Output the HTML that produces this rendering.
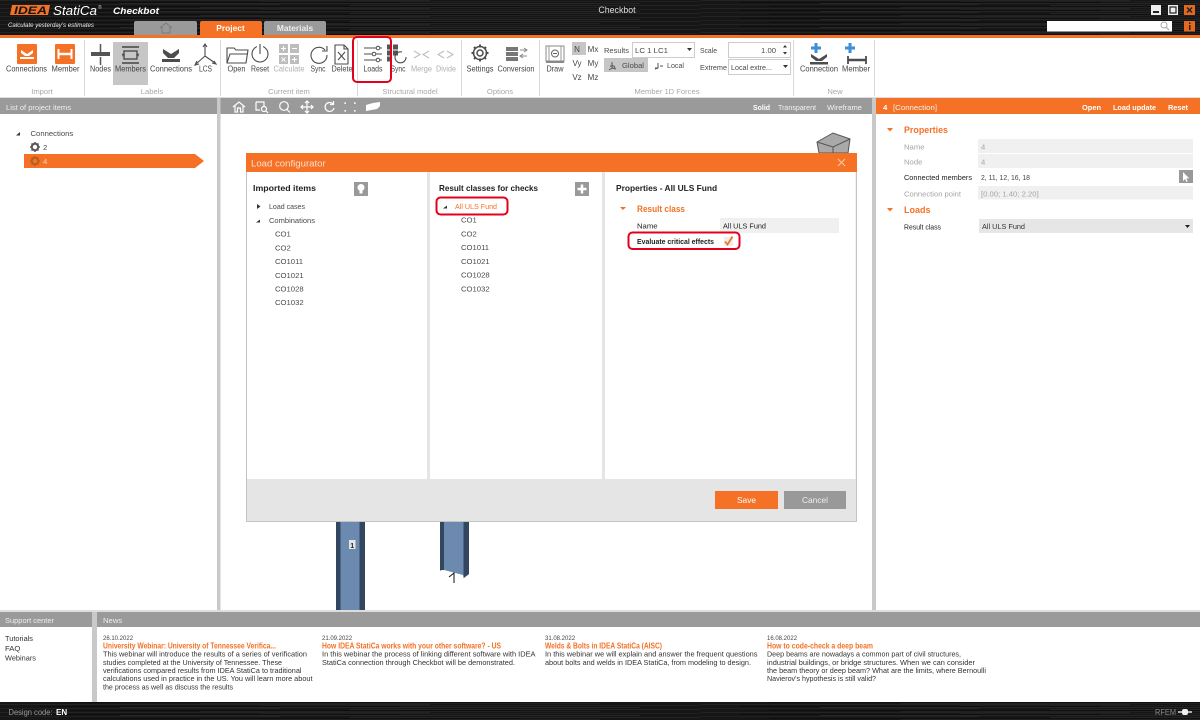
<!DOCTYPE html>
<html><head><meta charset="utf-8"><title>Checkbot</title>
<style>
html,body{margin:0;padding:0;background:#fff;width:1200px;height:720px;overflow:hidden}
svg{display:block;font-family:"Liberation Sans",sans-serif}
.r{font-size:8px;fill:#454545;text-anchor:middle}
.d{font-size:8px;fill:#b0b0b0;text-anchor:middle}
.g{font-size:7.6px;fill:#a8a8a8;text-anchor:middle}
.t{font-size:7.7px;fill:#4a4a4a}
.b{font-size:8.4px;fill:#222;font-weight:bold}
.w{font-size:7.7px;fill:#f2f2f2}
.wb{font-size:7.7px;fill:#fff;font-weight:bold}
.o{font-size:9px;fill:#f47125;font-weight:bold}
.n{font-size:7.4px;fill:#333}
.nt{font-size:7.8px;fill:#f47125;font-weight:bold}
.nd{font-size:6px;fill:#444}
.ic{fill:none;stroke:#4d4d4d;stroke-width:1.1}
.id{fill:none;stroke:#bdbdbd;stroke-width:1.1}
.iw{fill:none;stroke:#fff;stroke-width:1.2}
.red{fill:none;stroke:#e3001b;stroke-width:2}
</style></head><body>
<svg width="1200" height="720" viewBox="0 0 1200 720" xmlns="http://www.w3.org/2000/svg">
<defs>
<pattern id="st" width="700" height="8" patternUnits="userSpaceOnUse">
<rect width="700" height="8" fill="#161616"/>
<rect y="0" width="430" height="1" fill="#232323"/><rect x="260" y="1" width="440" height="1" fill="#1f1f1f"/>
<rect x="40" y="2" width="360" height="1" fill="#0e0e0e"/><rect x="120" y="3" width="520" height="1" fill="#262626"/>
<rect x="0" y="4" width="280" height="1" fill="#202020"/><rect x="350" y="5" width="350" height="1" fill="#242424"/>
<rect x="70" y="6" width="450" height="1" fill="#0f0f0f"/><rect x="200" y="7" width="400" height="1" fill="#212121"/>
</pattern>
<symbol id="gear" viewBox="0 0 10 10"><circle cx="5" cy="5" r="3.2" fill="none" stroke="currentColor" stroke-width="2"/><path d="M5 0v2M5 8v2M0 5h2M8 5h2M1.5 1.5l1.4 1.4M7.1 7.1l1.4 1.4M8.5 1.5L7.1 2.9M2.9 7.1L1.5 8.5" stroke="currentColor" stroke-width="1.6"/></symbol>
<symbol id="plus" viewBox="0 0 10 10"><path d="M5 0v10M0 5h10" stroke="#3c8fd6" stroke-width="3"/></symbol>
</defs>

<!-- header -->
<rect width="1200" height="35" fill="url(#st)"/>
<rect y="35" width="1200" height="3" fill="#f47125"/>
<path d="M12 5h38l-2 10H10z" fill="#f47125"/>
<text x="14" y="14" font-size="11" font-weight="bold" font-style="italic" fill="#151515" textLength="33" lengthAdjust="spacingAndGlyphs">IDEA</text>
<text x="53" y="15" font-size="13" font-style="italic" fill="#fff" textLength="44" lengthAdjust="spacingAndGlyphs">StatiCa</text>
<text x="98" y="9" font-size="5" fill="#ccc">®</text>
<text x="113" y="14" font-size="9.5" font-style="italic" font-weight="bold" fill="#fff" textLength="46" lengthAdjust="spacingAndGlyphs">Checkbot</text>
<text x="8" y="27" font-size="6" font-style="italic" fill="#eee" textLength="86" lengthAdjust="spacingAndGlyphs">Calculate yesterday's estimates</text>
<text x="617" y="13" font-size="8.8" fill="#ddd" text-anchor="middle">Checkbot</text>

<path d="M134 35V23q0-2 2-2h59q2 0 2 2v12z" fill="#9a9a9a"/>
<path d="M160 28l6-5 6 5M162 27v6h8v-6" fill="none" stroke="#7b7b7b" stroke-width="1"/>
<path d="M200 35V23q0-2 2-2h58q2 0 2 2v12z" fill="#f47125"/>
<text x="230.500" y="31" font-size="8.4" font-weight="bold" fill="#fff" text-anchor="middle">Project</text>
<path d="M264 35V23q0-2 2-2h58q2 0 2 2v12z" fill="#9a9a9a"/>
<text x="295" y="31" font-size="8.4" font-weight="bold" fill="#eee" text-anchor="middle">Materials</text>

<rect x="1151" y="5" width="10" height="10" fill="#eee"/><rect x="1153" y="11" width="6" height="2" fill="#222"/>
<rect x="1168" y="5" width="10" height="10" fill="#eee"/><rect x="1170" y="7" width="6" height="6" fill="none" stroke="#222" stroke-width="1.2"/>
<rect x="1184" y="5" width="11" height="10" fill="#e2691f"/><path d="M1187 7.500l5 5M1192 7.500l-5 5" stroke="#222" stroke-width="1.5"/>
<rect x="1047" y="21" width="125" height="10.500" fill="#fff"/>
<circle cx="1164" cy="25" r="3" fill="none" stroke="#aaa"/><path d="M1166 27l3 3" stroke="#aaa" stroke-width="1.2"/>
<rect x="1184" y="21" width="11" height="10.500" fill="#e2691f"/><rect x="1189" y="22.500" width="1.500" height="1.500" fill="#222"/><rect x="1189" y="25" width="1.500" height="5" fill="#222"/>

<!-- ribbon separators -->
<g fill="#d8d8d8">
<rect x="84" y="40" width="1" height="56"/><rect x="220" y="40" width="1" height="56"/><rect x="357" y="40" width="1" height="56"/>
<rect x="461" y="40" width="1" height="56"/><rect x="539" y="40" width="1" height="56"/><rect x="793" y="40" width="1" height="56"/><rect x="874" y="40" width="1" height="56"/>
</g>
<rect x="113" y="42" width="35" height="43" fill="#c6c6c6"/>

<!-- ribbon icons -->
<rect x="17" y="44" width="20" height="20" rx="1" fill="#f47125"/>
<path d="M21 50l6 4 6-4v3l-4 3h-4l-4-3zM20 57h14v2H20z" fill="#fff"/>
<rect x="55" y="44" width="20" height="20" rx="1" fill="#f47125"/>
<path d="M58.500 49v10M71.500 49v10" stroke="#fff" stroke-width="2"/><path d="M58 54h14" stroke="#fff" stroke-width="2.500"/>
<path d="M100.500 44v8M100.500 57v8" stroke="#555" stroke-width="1.500"/><rect x="91" y="52" width="19" height="4" fill="#555"/>
<path d="M122 47h17M122 63h17" stroke="#444" stroke-width="1.500"/><rect x="124" y="51" width="13" height="8" fill="none" stroke="#444" stroke-width="1.300"/><path d="M122 54l2 1-2 1M139 54l-2 1 2 1" stroke="#444" fill="none"/>
<path d="M163 49l8 5 8-5v4l-5 5h-6l-5-5z" fill="#4d4d4d"/><rect x="162" y="59" width="18" height="3" fill="#4d4d4d"/>
<path d="M205 56V45M205 56l10 7M205 56l-9 8" class="ic"/><path d="M203 47l2-3 2 3M212 63l4 1-2-3M197 61l-2 4 4-1" class="ic"/>
<path d="M227 63V48h7l2 2h12l-2 13z M227 63l3-9h18" class="ic"/>
<circle cx="260" cy="54" r="8" class="ic"/><rect x="257" y="44" width="6" height="5" fill="#fff"/><path d="M260 44v10" class="ic"/>
<g fill="#bdbdbd"><rect x="279" y="44" width="9" height="9"/><rect x="290" y="44" width="9" height="9"/><rect x="279" y="55" width="9" height="9"/><rect x="290" y="55" width="9" height="9"/></g>
<path d="M281 48.500h5M283.500 46v5M292 48.500h5M281.500 57.500l4 4M285.500 57.500l-4 4M292 59.500h5M294.500 57v5" stroke="#fff" stroke-width="1"/>
<path d="M325 50a8 8 0 1 0 2 5" class="ic"/><path d="M327 46v5h-5" class="ic"/>
<path d="M335 45h9l4 4v15h-13z M344 45v4h4" class="ic"/><path d="M338 52l7 8M345 52l-7 8" class="ic"/>
<g class="ic"><path d="M364 48h18M364 54h18M364 60h18"/></g>
<circle cx="378" cy="48" r="1.800" fill="#fff" stroke="#4d4d4d"/><circle cx="374" cy="54" r="1.800" fill="#fff" stroke="#4d4d4d"/><circle cx="378" cy="60" r="1.800" fill="#fff" stroke="#4d4d4d"/>
<g fill="#555"><rect x="387" y="44.500" width="5" height="5"/><rect x="393" y="44.500" width="5" height="5"/><rect x="387" y="50.500" width="5" height="5"/><rect x="393" y="50.500" width="5" height="5"/><rect x="387" y="56.500" width="5" height="5"/></g>
<path d="M406 57a5.500 5.500 0 1 1-4-5" class="ic" fill="#fff"/>
<path d="M414 51l6 3.500-6 3.500M429 51l-6 3.500 6 3.500M444 51l-6 3.500 6 3.500M447 51l6 3.500-6 3.500" class="id"/>
<g fill="none" stroke="#4d4d4d" stroke-width="1.500"><circle cx="480" cy="53" r="3"/><circle cx="480" cy="53" r="6.500"/></g>
<path d="M480 44.500v3M480 58.500v3M471.500 53h3M485.500 53h3M474 47l2 2M484 57l2 2M486 47l-2 2M476 57l-2 2" stroke="#4d4d4d" stroke-width="2"/>
<g fill="#777"><rect x="506" y="47" width="12" height="4"/><rect x="506" y="52" width="12" height="4"/><rect x="506" y="57" width="12" height="4"/></g>
<path d="M520 50h7M524 48l3 2-3 2M527 56h-7M523 54l-3 2 3 2" fill="none" stroke="#888"/>
<rect x="546" y="46" width="18" height="15" fill="none" stroke="#888"/><path d="M549 46v15M561 46v15" stroke="#999"/><circle cx="555" cy="53.500" r="3.500" fill="none" stroke="#666"/><path d="M553 53.500h4" stroke="#666"/><rect x="546" y="61" width="18" height="2" fill="#888"/>
<rect x="572" y="42" width="14" height="13" fill="#c6c6c6"/>
<rect x="604" y="58" width="44" height="14" fill="#c6c6c6"/>
<path d="M612 68v-6M612 68l4 1M612 68l-3 2M610 66h4l1 2" fill="none" stroke="#555"/>
<path d="M658 63v5h-3M658 68l-3 1M660 66h3" fill="none" stroke="#555"/>
<rect x="632.500" y="42.500" width="62" height="15" fill="#fff" stroke="#ccc"/><path d="M687 48h5l-2.500 3z" fill="#333"/>
<rect x="728.500" y="42.500" width="62" height="15" fill="#fff" stroke="#ccc"/><path d="M783 47.500l2-2.500 2 2.500zM783 52l2 2.500 2-2.500z" fill="#333"/>
<rect x="728.500" y="59.500" width="62" height="15" fill="#fff" stroke="#ccc"/><path d="M783 65h5l-2.500 3z" fill="#333"/>
<use href="#plus" x="811" y="43" width="10" height="10"/>
<path d="M811 54l8 5 8-5v3l-5 4h-6l-5-4z" fill="#4d4d4d"/><rect x="810" y="62" width="18" height="2.500" fill="#4d4d4d"/>
<use href="#plus" x="845" y="43" width="10" height="10"/>
<path d="M848 56v8M866 56v8" stroke="#4d4d4d" stroke-width="1.800"/><path d="M848 60h18" stroke="#4d4d4d" stroke-width="2.500"/>

<!-- ribbon labels -->
<g class="r" lengthAdjust="spacingAndGlyphs">
<text x="26.500" y="71.500" textLength="41" lengthAdjust="spacingAndGlyphs">Connections</text><text x="65.500" y="71.500" textLength="28" lengthAdjust="spacingAndGlyphs">Member</text><text x="100.500" y="71.500" textLength="21" lengthAdjust="spacingAndGlyphs">Nodes</text>
<text x="130.500" y="71.500" textLength="31" lengthAdjust="spacingAndGlyphs">Members</text><text x="171" y="71.500" textLength="42" lengthAdjust="spacingAndGlyphs">Connections</text><text x="205.500" y="71.500" textLength="13" lengthAdjust="spacingAndGlyphs">LCS</text>
<text x="236.500" y="71.500" textLength="18" lengthAdjust="spacingAndGlyphs">Open</text><text x="260" y="71.500" textLength="18" lengthAdjust="spacingAndGlyphs">Reset</text><text x="318" y="71.500" textLength="15" lengthAdjust="spacingAndGlyphs">Sync</text><text x="342" y="71.500" textLength="21" lengthAdjust="spacingAndGlyphs">Delete</text>
<text x="373" y="71.500" textLength="19" lengthAdjust="spacingAndGlyphs">Loads</text><text x="398" y="71.500" textLength="15" lengthAdjust="spacingAndGlyphs">Sync</text><text x="480" y="71.500" textLength="27" lengthAdjust="spacingAndGlyphs">Settings</text><text x="516" y="71.500" textLength="37" lengthAdjust="spacingAndGlyphs">Conversion</text>
<text x="555" y="71.500" textLength="17" lengthAdjust="spacingAndGlyphs">Draw</text><text x="819" y="71.500" textLength="38" lengthAdjust="spacingAndGlyphs">Connection</text><text x="856" y="71.500" textLength="28" lengthAdjust="spacingAndGlyphs">Member</text>
<text x="577" y="52">N</text><text x="593" y="52">Mx</text><text x="577" y="66">Vy</text><text x="593" y="66">My</text><text x="577" y="80">Vz</text><text x="593" y="80">Mz</text>
</g>
<g class="d"><text x="289" y="71.500" textLength="31" lengthAdjust="spacingAndGlyphs">Calculate</text><text x="421.500" y="71.500" textLength="21" lengthAdjust="spacingAndGlyphs">Merge</text><text x="446" y="71.500" textLength="20" lengthAdjust="spacingAndGlyphs">Divide</text></g>
<g class="t">
<text x="604" y="53" textLength="25" lengthAdjust="spacingAndGlyphs">Results</text><text x="635" y="53" textLength="33" lengthAdjust="spacingAndGlyphs">LC 1 LC1</text><text x="700" y="53" textLength="17" lengthAdjust="spacingAndGlyphs">Scale</text><text x="700" y="70" textLength="27" lengthAdjust="spacingAndGlyphs">Extreme</text>
<text x="731" y="70" textLength="41" lengthAdjust="spacingAndGlyphs">Local extre...</text><text x="622" y="68" textLength="22" lengthAdjust="spacingAndGlyphs">Global</text><text x="667" y="68" textLength="17" lengthAdjust="spacingAndGlyphs">Local</text>
<text x="776" y="53" text-anchor="end">1.00</text></g>
<g class="g"><text x="42" y="94">Import</text><text x="152" y="94">Labels</text><text x="289" y="94">Current item</text><text x="410" y="94">Structural model</text><text x="500" y="94">Options</text><text x="667" y="94">Member 1D Forces</text><text x="835" y="94">New</text></g>
<rect x="353" y="37" width="38" height="45" rx="4" class="red"/>

<!-- panel frames -->
<rect y="97" width="1200" height="1" fill="#ddd"/>
<rect y="98" width="217" height="16" fill="#9a9a9a"/>
<rect x="217" y="98" width="3.500" height="514" fill="#c9c9c9"/>
<rect x="220.500" y="98" width="651.500" height="16" fill="#9a9a9a"/>
<rect x="872" y="98" width="4" height="514" fill="#c9c9c9"/>
<rect x="876" y="98" width="324" height="16" fill="#f47125"/>
<text x="6" y="110" class="w" style="fill:#eee" textLength="65" lengthAdjust="spacingAndGlyphs">List of project items</text>
<g class="iw">
<path d="M233 107l6-5 6 5M235 106v6h2.500v-4h3v4h2.500v-6"/>
<path d="M256 102h8v5M256 102v8h4"/><circle cx="264" cy="109" r="2.500"/><path d="M266 111l2 2"/>
<circle cx="284" cy="106" r="4.300"/><path d="M287 109.500l3 3"/>
<path d="M307 101v12M301 107h12M305 103l2-2 2 2M305 111l2 2 2-2M303 105l-2 2 2 2M311 105l2 2-2 2"/>
<path d="M333 104a4.500 4.500 0 1 0 1 4M333.500 101v3.500H330"/>
<path d="M346 103h-1v1M354 103h1v1M346 111h-1v-1M354 111h1v-1"/>
</g>
<path d="M366 105l7-2 7-1v4l-3 3-11 2z" fill="#fff"/>
<text x="753" y="110" class="wb" textLength="17" lengthAdjust="spacingAndGlyphs">Solid</text><text x="778" y="110" class="w" textLength="38" lengthAdjust="spacingAndGlyphs">Transparent</text><text x="827" y="110" class="w" textLength="35" lengthAdjust="spacingAndGlyphs">Wireframe</text>
<text x="883" y="110" class="wb">4</text><text x="893" y="110" class="w" textLength="44" lengthAdjust="spacingAndGlyphs">[Connection]</text>
<text x="1082" y="110" class="wb" textLength="19" lengthAdjust="spacingAndGlyphs">Open</text><text x="1113" y="110" class="wb" textLength="43" lengthAdjust="spacingAndGlyphs">Load update</text><text x="1168" y="110" class="wb" textLength="20" lengthAdjust="spacingAndGlyphs">Reset</text>

<!-- left tree -->
<path d="M16 135.500l4-3.500v3.500z" fill="#333"/>
<text x="30.500" y="136" class="t">Connections</text>
<use href="#gear" x="30" y="142" width="10" height="10" style="color:#5a5a5a"/>
<text x="43" y="150" class="t">2</text>
<path d="M24 154h171l9 7-9 7H24z" fill="#f47125"/>
<use href="#gear" x="30" y="156" width="10" height="10" style="color:#b5611f"/>
<text x="43" y="164" class="w" style="fill:#f6d5c0">4</text>

<!-- 3D -->
<path d="M817 142l16-9 17 6-2 14h-29z" fill="#a9a9a9" stroke="#555"/><path d="M817 142l16 5 17-8M833 147v6" fill="none" stroke="#555"/>
<rect x="336" y="521" width="29" height="91" fill="#6c8ab0"/><rect x="336" y="521" width="4.500" height="91" fill="#33465f"/><rect x="359.500" y="521" width="5.500" height="91" fill="#33465f"/>
<rect x="349" y="540" width="6.500" height="9" fill="#e5e5e5"/><text x="352.200" y="548" font-size="7" font-weight="bold" fill="#222" text-anchor="middle">1</text>
<path d="M440 521h29v53l-5 4-1-3-19-5v-1l-4 2z" fill="#6c8ab0"/><path d="M440 521h4v49h-4zM463.500 521H469v53l-5.500 4z" fill="#33465f"/>
<path d="M454 583v-10l-5 4" fill="none" stroke="#111" stroke-width="1"/>

<!-- dialog -->
<rect x="246.500" y="153.500" width="610" height="368" fill="#e5e5e5" stroke="#c4c4c4"/>
<rect x="246" y="153" width="611" height="19" fill="#f47125"/>
<text x="251" y="166.500" font-size="9.6" fill="#fde0cf">Load configurator</text>
<path d="M838 159l7 7M845 159l-7 7" stroke="#f9c9ab"/>
<rect x="247" y="172" width="180" height="307" fill="#fff"/><rect x="430" y="172" width="172" height="307" fill="#fff"/><rect x="605" y="172" width="250.500" height="307" fill="#fff"/>
<text x="253" y="191" class="b" textLength="63" lengthAdjust="spacingAndGlyphs">Imported items</text>
<rect x="354" y="182" width="14" height="14" fill="#999"/><circle cx="361" cy="187.500" r="3.500" fill="#fff"/><rect x="359.500" y="190" width="3" height="3.500" fill="#fff"/>
<path d="M257 204v5l3.500-2.500z" fill="#333"/><path d="M256 222.500l4-3v3z" fill="#333"/>
<g class="t">
<text x="269" y="209" textLength="36" lengthAdjust="spacingAndGlyphs">Load cases</text><text x="269" y="223" textLength="46" lengthAdjust="spacingAndGlyphs">Combinations</text>
<text x="275" y="236.500">CO1</text><text x="275" y="250.500">CO2</text><text x="275" y="264">CO1011</text><text x="275" y="278">CO1021</text><text x="275" y="291.500">CO1028</text><text x="275" y="305">CO1032</text>
<text x="461" y="222.500">CO1</text><text x="461" y="236.500">CO2</text><text x="461" y="250">CO1011</text><text x="461" y="264">CO1021</text><text x="461" y="277.500">CO1028</text><text x="461" y="291.500">CO1032</text>
</g>
<text x="439" y="191" class="b" textLength="99" lengthAdjust="spacingAndGlyphs">Result classes for checks</text>
<rect x="575" y="182" width="14" height="14" fill="#999"/><path d="M582 184.500v9M577.500 189h9" stroke="#fff" stroke-width="2.500"/>
<path d="M443 208.500l4-3v3z" fill="#333"/><text x="455" y="209" class="t" style="fill:#f47125" textLength="42" lengthAdjust="spacingAndGlyphs">All ULS Fund</text>
<rect x="436.500" y="197.500" width="71" height="17" rx="4" class="red"/>
<text x="616" y="191" class="b">Properties - All ULS Fund</text>
<path d="M620 207h6l-3 3z" fill="#f47125"/><text x="637" y="212" class="o" textLength="48" lengthAdjust="spacingAndGlyphs">Result class</text>
<text x="637" y="228.500" class="t" style="fill:#222">Name</text>
<rect x="720" y="218" width="119" height="15" fill="#f0f0f0"/><text x="723" y="228.500" class="t" style="fill:#222" textLength="43" lengthAdjust="spacingAndGlyphs">All ULS Fund</text>
<text x="637" y="244" class="t" style="fill:#222;font-weight:bold;font-size:7.6px" textLength="77" lengthAdjust="spacingAndGlyphs">Evaluate critical effects</text>
<rect x="724" y="237" width="9" height="9" fill="#eee"/><path d="M725 241.500l2.500 3 5-8" fill="none" stroke="#f47125" stroke-width="1.700"/>
<rect x="628.500" y="232.500" width="111" height="16.500" rx="4" class="red"/>
<rect x="715" y="491" width="63" height="18" fill="#f47125"/><text x="746.500" y="503" font-size="8.4" fill="#fff" text-anchor="middle">Save</text>
<rect x="784" y="491" width="62" height="18" fill="#999"/><text x="815" y="503" font-size="8.4" fill="#eee" text-anchor="middle">Cancel</text>

<!-- right props -->
<path d="M887 128h6l-3 3.500z" fill="#f47125"/><text x="904" y="133" class="o" textLength="44" lengthAdjust="spacingAndGlyphs">Properties</text>
<rect x="978" y="139" width="215" height="14" fill="#f0f0f0"/><rect x="978" y="154" width="215" height="14" fill="#f0f0f0"/><rect x="978" y="186" width="215" height="13.500" fill="#f0f0f0"/>
<g class="t" style="fill:#a5a5a5">
<text x="904" y="149.500">Name</text><text x="904" y="164.500">Node</text><text x="904" y="196.500" textLength="57" lengthAdjust="spacingAndGlyphs">Connection point</text>
<text x="981" y="149.500">4</text><text x="981" y="164.500">4</text><text x="981" y="196.500">[0.00; 1.40; 2.20]</text></g>
<g class="t" style="fill:#222"><text x="904" y="180" textLength="68" lengthAdjust="spacingAndGlyphs">Connected members</text><text x="904" y="229.500" textLength="37" lengthAdjust="spacingAndGlyphs">Result class</text><text x="981" y="180" style="fill:#444" textLength="49" lengthAdjust="spacingAndGlyphs">2, 11, 12, 16, 18</text></g>
<rect x="1179" y="170" width="14" height="13" fill="#999"/><path d="M1183 172v9l2-2 1.500 3 1.200-.6-1.500-3h3z" fill="#fff"/>
<path d="M887 208h6l-3 3.500z" fill="#f47125"/><text x="904" y="213" class="o">Loads</text>
<rect x="979" y="219" width="214" height="14" fill="#e6e6e6"/><text x="982" y="229" class="t" style="fill:#333" textLength="43" lengthAdjust="spacingAndGlyphs">All ULS Fund</text><path d="M1185 225h5l-2.500 3z" fill="#222"/>

<!-- bottom panels -->
<rect y="610" width="1200" height="2" fill="#ddd"/>
<rect y="612" width="92" height="15" fill="#9a9a9a"/>
<rect x="92" y="612" width="5" height="90" fill="#c9c9c9"/>
<rect x="97" y="612" width="1103" height="15" fill="#9a9a9a"/>
<rect y="627" width="92" height="75" fill="#fff"/>
<text x="5" y="623" class="w" style="fill:#eee" textLength="49" lengthAdjust="spacingAndGlyphs">Support center</text><text x="103" y="623" class="w" style="fill:#eee">News</text>
<g class="t" style="fill:#333"><text x="5" y="641" textLength="28" lengthAdjust="spacingAndGlyphs">Tutorials</text><text x="5" y="651">FAQ</text><text x="5" y="660.500" textLength="31" lengthAdjust="spacingAndGlyphs">Webinars</text></g>
<g class="nd"><text x="103" y="640">26.10.2022</text><text x="322" y="640">21.09.2022</text><text x="545" y="640">31.08.2022</text><text x="767" y="640">16.08.2022</text></g>
<g class="nt">
<text x="103" y="648.500" textLength="173" lengthAdjust="spacingAndGlyphs">University Webinar: University of Tennessee Verifica...</text>
<text x="322" y="648.500" textLength="179" lengthAdjust="spacingAndGlyphs">How IDEA StatiCa works with your other software? - US</text>
<text x="545" y="648.500" textLength="117" lengthAdjust="spacingAndGlyphs">Welds &amp; Bolts in IDEA StatiCa (AISC)</text>
<text x="767" y="648.500" textLength="106" lengthAdjust="spacingAndGlyphs">How to code-check a deep beam</text>
</g>
<g class="n">
<text x="103" y="656.500" textLength="204" lengthAdjust="spacingAndGlyphs">This webinar will introduce the results of a series of verification</text>
<text x="103" y="665" textLength="179" lengthAdjust="spacingAndGlyphs">studies completed at the University of Tennessee. These</text>
<text x="103" y="673" textLength="198.500" lengthAdjust="spacingAndGlyphs">verifications compared results from IDEA StatiCa to traditional</text>
<text x="103" y="681" textLength="209.500" lengthAdjust="spacingAndGlyphs">calculations used in practice in the US.  You will learn more about</text>
<text x="103" y="689.500" textLength="130" lengthAdjust="spacingAndGlyphs">the process as well as discuss the results</text>
<text x="322" y="656.500" textLength="213.500" lengthAdjust="spacingAndGlyphs">In this webinar the process of linking different software with IDEA</text>
<text x="322" y="665" textLength="193" lengthAdjust="spacingAndGlyphs">StatiCa connection through Checkbot will be demonstrated.</text>
<text x="545" y="656.500" textLength="212.500" lengthAdjust="spacingAndGlyphs">In this webinar we will explain and answer the frequent questions</text>
<text x="545" y="665" textLength="206" lengthAdjust="spacingAndGlyphs">about bolts and welds in IDEA StatiCa, from modeling to design.</text>
<text x="767" y="656.500" textLength="194" lengthAdjust="spacingAndGlyphs">Deep beams are nowadays a common part of civil structures,</text>
<text x="767" y="665" textLength="208" lengthAdjust="spacingAndGlyphs">industrial buildings, or bridge structures. When we can consider</text>
<text x="767" y="673" textLength="219" lengthAdjust="spacingAndGlyphs">the beam theory or deep beam? What are the limits, where Bernoulli</text>
<text x="767" y="681" textLength="109" lengthAdjust="spacingAndGlyphs">Navierov's hypothesis is still valid?</text>
</g>

<!-- bottom bar -->
<rect y="702" width="1200" height="18" fill="url(#st)"/>
<text x="8.500" y="715" font-size="8" fill="#999" textLength="44" lengthAdjust="spacingAndGlyphs">Design code:</text><text x="56" y="715" font-size="8" font-weight="bold" fill="#fff">EN</text>
<text x="1155" y="715" font-size="8" fill="#888" textLength="21" lengthAdjust="spacingAndGlyphs">RFEM</text>
<path d="M1178 712h4M1188 712h4" stroke="#ddd" stroke-width="1.500"/><rect x="1182" y="709" width="6" height="6" rx="2" fill="#eee"/>
</svg>
</body></html>
